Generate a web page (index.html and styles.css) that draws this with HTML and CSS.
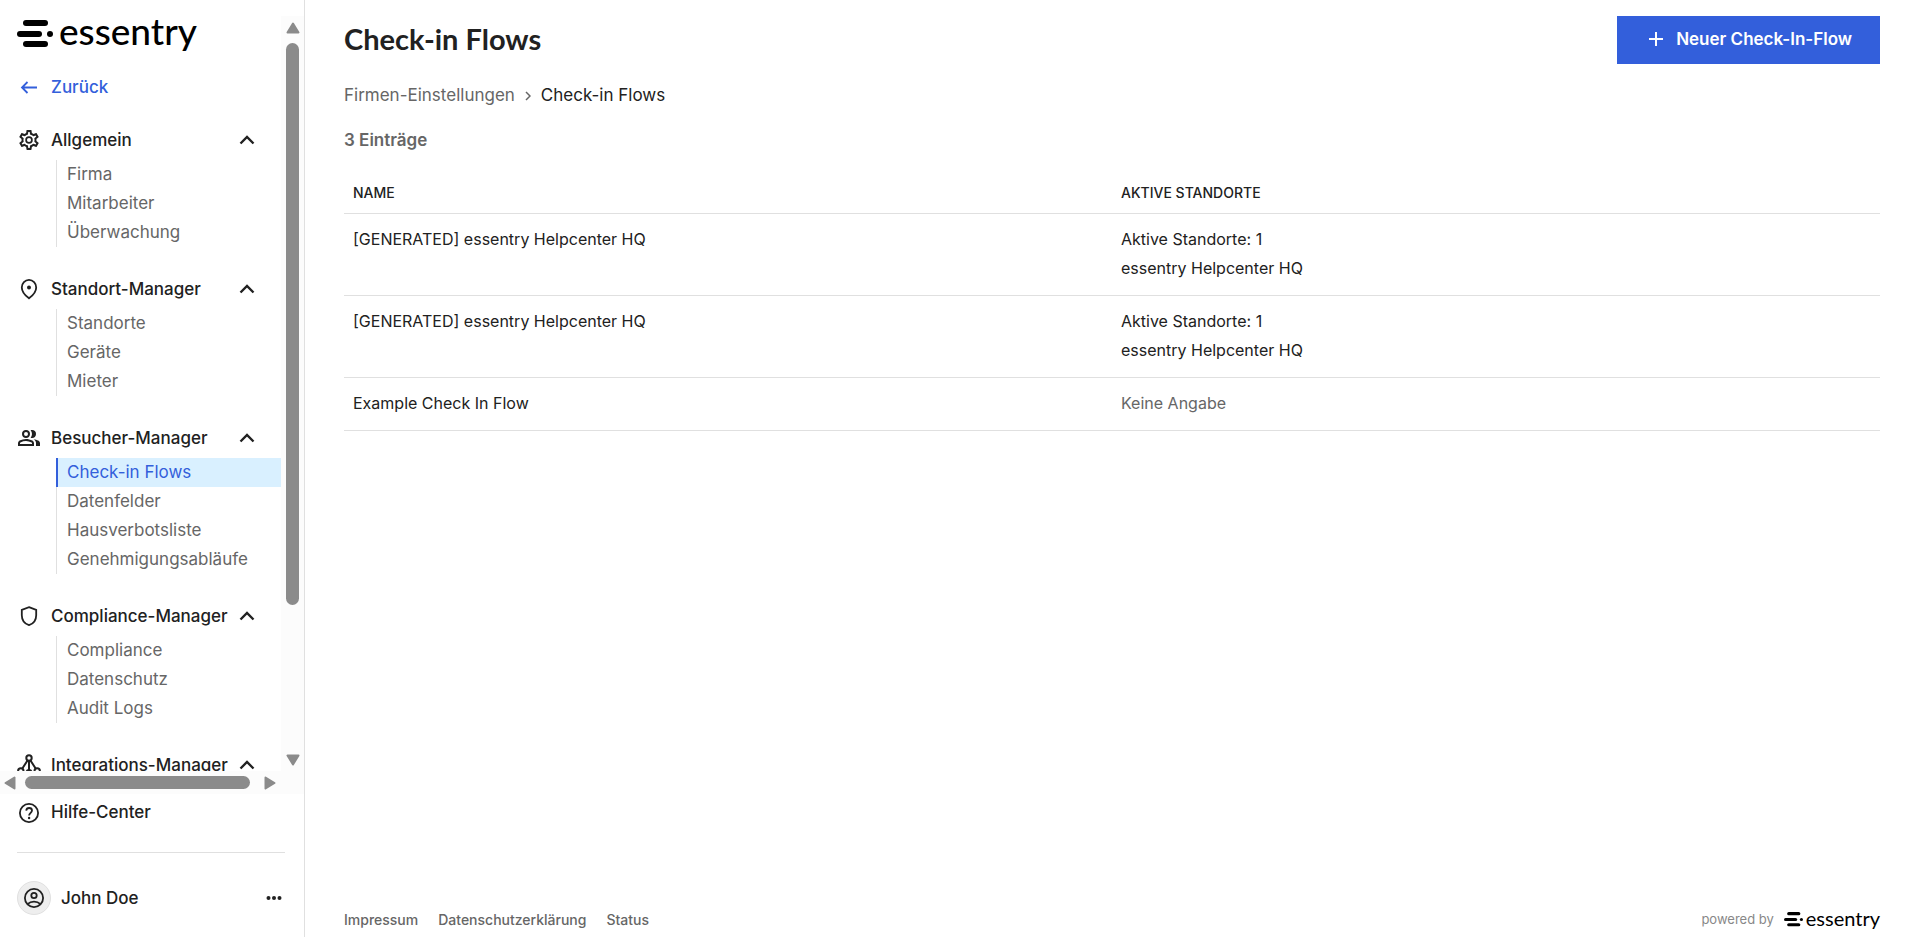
FILE: index.html
```html
<!DOCTYPE html>
<html lang="de">
<head>
  <meta charset="UTF-8"/>
  <meta name="viewport" content="width=device-width, initial-scale=1"/>
  <title>Check-in Flows | essentry</title>
  <link rel="stylesheet" href="styles.css">
</head>
<body>
  <!-- shared shapes -->
  <svg class="sprite" aria-hidden="true">
    <symbol id="mark" viewBox="0 0 36 28">
      <rect x="6" y="0" width="25" height="6" rx="3"/>
      <rect x="0" y="11" width="25" height="6" rx="3"/>
      <circle cx="33" cy="14" r="3"/>
      <rect x="6" y="21" width="25" height="6" rx="3"/>
    </symbol>
    <symbol id="chevron" viewBox="0 0 24 24">
      <path d="M5.500 15.500L12 9l6.500 6.500" fill="none" stroke="currentColor" stroke-width="2.4"/>
    </symbol>
  </svg>

  <aside class="sidebar">
    <div class="scroll-area">
      <nav class="nav">
        <a class="logo" href="#" aria-label="essentry">
          <svg class="logo-mark"><use href="#mark"/></svg>
          <span>essentry</span>
        </a>

        <a class="back" href="#">
          <svg class="icon" viewBox="0 0 24 24" fill="none" stroke="currentColor" stroke-width="1.8"><path d="M20 12.5H5M10.500 7L5 12.500l5.500 5.500"/></svg>
          Zurück
        </a>

        <section class="group">
          <button class="group-head" aria-expanded="true">
            <svg class="icon" viewBox="0 0 24 24" fill="currentColor"><path d="M19.430 12.980c.040-.320.070-.640.070-.980s-.030-.660-.070-.980l2.110-1.650c.190-.150.240-.420.120-.640l-2-3.460c-.090-.160-.260-.250-.440-.250-.060 0-.120.010-.170.030l-2.490 1c-.520-.400-1.080-.730-1.690-.980l-.380-2.650C14.460 2.180 14.250 2 14 2h-4c-.250 0-.460.180-.490.420l-.380 2.650c-.610.250-1.170.590-1.690.980l-2.490-1c-.060-.020-.120-.030-.180-.030-.170 0-.340.090-.430.250l-2 3.460c-.130.220-.070.490.120.640l2.110 1.650c-.040.320-.070.650-.070.980s.030.660.070.980l-2.110 1.650c-.190.150-.240.420-.120.640l2 3.460c.090.160.260.250.440.250.060 0 .120-.010.170-.030l2.490-1c.520.400 1.080.730 1.690.980l.380 2.650c.030.240.240.420.490.420h4c.250 0 .460-.180.490-.420l.380-2.650c.610-.250 1.170-.590 1.690-.980l2.490 1c.060.020.120.030.180.030.170 0 .340-.090.430-.250l2-3.460c.120-.220.070-.490-.120-.640l-2.110-1.650zm-1.980-1.710c.040.310.050.520.050.730s-.020.430-.050.730l-.140 1.130.890.700 1.080.840-.700 1.210-1.270-.510-1.040-.420-.900.680c-.430.320-.840.560-1.250.730l-1.060.430-.160 1.130-.200 1.350h-1.400l-.190-1.350-.160-1.130-1.060-.430c-.430-.180-.830-.410-1.230-.710l-.910-.700-1.060.430-1.270.510-.700-1.210 1.080-.840.890-.700-.140-1.130c-.030-.310-.050-.540-.050-.740s.020-.430.050-.730l.140-1.130-.890-.700-1.080-.840.700-1.210 1.270.510 1.040.420.900-.680c.430-.320.840-.560 1.250-.730l1.060-.430.160-1.130.200-1.350h1.390l.190 1.350.160 1.130 1.060.430c.430.180.830.410 1.230.710l.910.700 1.060-.430 1.270-.510.700 1.210-1.070.850-.890.700.140 1.130z"/><circle cx="12" cy="12" r="2.900" fill="none" stroke="currentColor" stroke-width="1.700"/></svg>
            <span>Allgemein</span>
            <svg class="chevron"><use href="#chevron"/></svg>
          </button>
          <ul>
            <li><a href="#">Firma</a></li>
            <li><a href="#">Mitarbeiter</a></li>
            <li><a href="#">Überwachung</a></li>
          </ul>
        </section>

        <section class="group">
          <button class="group-head" aria-expanded="true">
            <svg class="icon" viewBox="0 0 24 24" fill="none" stroke="currentColor" stroke-width="1.8"><path d="M12 21.300c-2.600-1.900-7.200-5.700-7.200-10.800a7.200 7.600 0 0 1 14.400 0c0 5.100-4.600 8.900-7.200 10.800z"/><circle cx="12" cy="10.500" r="2" fill="currentColor" stroke="none"/></svg>
            <span>Standort-Manager</span>
            <svg class="chevron"><use href="#chevron"/></svg>
          </button>
          <ul>
            <li><a href="#">Standorte</a></li>
            <li><a href="#">Geräte</a></li>
            <li><a href="#">Mieter</a></li>
          </ul>
        </section>

        <section class="group">
          <button class="group-head" aria-expanded="true">
            <svg class="icon" viewBox="0 0 24 24" fill="currentColor"><path d="M1 20v-2.800c0-.600.150-1.100.450-1.560.300-.460.700-.810 1.190-1.050A15.500 15.500 0 0 1 9 13c2.200 0 4.300.530 6.360 1.590.490.240.890.590 1.190 1.050.300.460.450.960.450 1.560V20H1zm18 0v-3c0-.730-.200-1.440-.610-2.110A4.900 4.900 0 0 0 16.650 13.150c.850.100 1.650.270 2.400.510.750.240 1.450.540 2.100.890.600.330 1.060.700 1.380 1.110.310.410.470.860.470 1.340v3h-4zM9 12a3.850 3.850 0 0 1-4-4 3.850 3.850 0 0 1 4-4 3.850 3.850 0 0 1 4 4 3.850 3.850 0 0 1-4 4zm10-4a3.850 3.850 0 0 1-4 4c-.300 0-.700-.050-1.400-.200A6 6 0 0 0 15 8a6 6 0 0 0-1.400-3.800c.400-.150.900-.200 1.400-.200a3.850 3.850 0 0 1 4 4zM3 18h12v-.800a.920.920 0 0 0-.500-.800A12.600 12.600 0 0 0 9 15c-1.850 0-3.650.450-5.500 1.400a.920.920 0 0 0-.500.800V18zm6-8a2 2 0 1 0 0-4 2 2 0 0 0 0 4z"/></svg>
            <span>Besucher-Manager</span>
            <svg class="chevron"><use href="#chevron"/></svg>
          </button>
          <ul>
            <li class="active"><a href="#" aria-current="page">Check-in Flows</a></li>
            <li><a href="#">Datenfelder</a></li>
            <li><a href="#">Hausverbotsliste</a></li>
            <li><a href="#">Genehmigungsabläufe</a></li>
          </ul>
        </section>

        <section class="group">
          <button class="group-head" aria-expanded="true">
            <svg class="icon" viewBox="0 0 24 24" fill="none" stroke="currentColor" stroke-width="1.8"><path d="M12 3.200l7.200 2.700v5.300c0 4.700-3 8.500-7.200 9.900-4.200-1.400-7.200-5.200-7.200-9.900V5.900z"/></svg>
            <span>Compliance-Manager</span>
            <svg class="chevron"><use href="#chevron"/></svg>
          </button>
          <ul>
            <li><a href="#">Compliance</a></li>
            <li><a href="#">Datenschutz</a></li>
            <li><a href="#">Audit Logs</a></li>
          </ul>
        </section>

        <section class="group">
          <button class="group-head" aria-expanded="true">
            <svg class="icon" viewBox="0 0 24 24" fill="none" stroke="currentColor" stroke-width="2"><circle cx="12" cy="5" r="2.700"/><path d="M12 8v10M10.500 7.500L5 16M13.500 7.500L19 16"/><circle cx="3.800" cy="18" r="2.700"/><circle cx="12" cy="19.500" r="2.500"/><circle cx="20.200" cy="18" r="2.700"/></svg>
            <span>Integrations-Manager</span>
            <svg class="chevron"><use href="#chevron"/></svg>
          </button>
        </section>
      </nav>

      <div class="bar bar-y" aria-hidden="true">
        <svg class="arrow" viewBox="0 0 14 12"><path d="M7 1.500L12.500 10.500H1.500z"/></svg>
        <div class="track"><div class="thumb"></div></div>
        <svg class="arrow" viewBox="0 0 14 12"><path d="M1.500 1.500h11L7 10.500z"/></svg>
      </div>
      <div class="bar bar-x" aria-hidden="true">
        <svg class="arrow" viewBox="0 0 12 14"><path d="M1.500 7L10.500 1.500v11z"/></svg>
        <div class="track"><div class="thumb"></div></div>
        <svg class="arrow" viewBox="0 0 12 14"><path d="M1.500 1.500L10.500 7l-9 5.500z"/></svg>
      </div>
    </div>

    <div class="sidebar-bottom">
      <a class="help" href="#">
        <svg class="icon" viewBox="0 0 24 24" fill="none" stroke="currentColor" stroke-width="1.8"><circle cx="12" cy="12" r="9.100"/><path d="M9.200 9.600c.200-1.700 1.300-2.600 2.900-2.600 1.700 0 2.900 1 2.900 2.500 0 1.200-.700 1.800-1.600 2.600-.900.800-1.300 1.300-1.300 2.400"/><circle cx="12.100" cy="17" r="1.200" fill="currentColor" stroke="none"/></svg>
        Hilfe-Center
      </a>
      <div class="user">
        <span class="avatar">
          <svg class="icon" viewBox="0 0 24 24" fill="none" stroke="currentColor" stroke-width="1.8"><circle cx="12" cy="12" r="9.100"/><circle cx="12" cy="9.500" r="2.700"/><path d="M5.500 18.200c1.700-1.600 3.900-2.500 6.500-2.500s4.800.900 6.500 2.500"/></svg>
        </span>
        <span class="user-name">John Doe</span>
        <button class="more" aria-label="Mehr">
          <svg viewBox="0 0 16 6"><circle cx="2.500" cy="3" r="2"/><circle cx="8" cy="3" r="2"/><circle cx="13.500" cy="3" r="2"/></svg>
        </button>
      </div>
    </div>
  </aside>

  <main class="main">
    <header class="page-head">
      <h1>Check-in Flows</h1>
      <button class="primary">
        <svg viewBox="0 0 14 14" fill="none" stroke="currentColor" stroke-width="2"><path d="M7 0v14M0 7h14"/></svg>
        Neuer Check-In-Flow
      </button>
    </header>

    <nav class="crumbs" aria-label="Breadcrumb">
      <a href="#">Firmen-Einstellungen</a>
      <svg viewBox="0 0 6 10" fill="none" stroke="currentColor" stroke-width="1.5"><path d="M1 1l4 4-4 4"/></svg>
      <span>Check-in Flows</span>
    </nav>

    <p class="count">3 Einträge</p>

    <table>
      <thead>
        <tr><th>NAME</th><th>AKTIVE STANDORTE</th></tr>
      </thead>
      <tbody>
        <tr>
          <td>[GENERATED] essentry Helpcenter HQ</td>
          <td>Aktive Standorte: 1<br>essentry Helpcenter HQ</td>
        </tr>
        <tr>
          <td>[GENERATED] essentry Helpcenter HQ</td>
          <td>Aktive Standorte: 1<br>essentry Helpcenter HQ</td>
        </tr>
        <tr>
          <td>Example Check In Flow</td>
          <td class="muted">Keine Angabe</td>
        </tr>
      </tbody>
    </table>

    <footer class="footer">
      <a href="#">Impressum</a>
      <a href="#">Datenschutzerklärung</a>
      <a href="#">Status</a>
      <span class="powered">powered by</span>
      <span class="logo logo-small">
        <svg class="logo-mark"><use href="#mark"/></svg>
        <span>essentry</span>
      </span>
    </footer>
  </main>
</body>
</html>
```
FILE: styles.css
```css
* { box-sizing:border-box; }
body { margin:0; display:flex; height:100vh; font-family:Inter,sans-serif; font-size:17px; line-height:29px; color:#212121; background:#fff; }
a { color:inherit; text-decoration:none; }
button { font:inherit; color:inherit; background:none; border:none; padding:0; cursor:pointer; }
ul { list-style:none; margin:0; padding:0; }
.sprite { position:absolute; width:0; height:0; }
.icon { width:24px; height:24px; flex:none; }

/* logo */
.logo { display:flex; align-items:center; gap:6px; height:44px; font-family:Lato,sans-serif; font-size:37px; line-height:38px; color:#000; }
.logo span { padding-bottom:6px; }
.logo-mark { width:36px; height:28px; flex:none; }
.logo-small { gap:3px; height:24px; font-size:20px; line-height:20px; }
.logo-small .logo-mark { width:19px; height:15px; }

/* sidebar */
.sidebar { display:flex; flex-direction:column; flex:none; width:305px; border-right:1px solid #e0e0e0; }
.scroll-area { flex:1; min-height:0; display:grid; grid-template:minmax(0,1fr) 23px / minmax(0,1fr) 23px; }
.nav { overflow:hidden; padding:12px 0 0 17px; font-weight:500; }
.back { display:flex; align-items:center; gap:10px; height:40px; margin:11px 0 13px; color:#335fdb; }
.group { margin-bottom:22px; }
.group-head { display:flex; align-items:center; gap:10px; width:100%; height:40px; padding-right:22px; font-weight:500; text-align:left; white-space:nowrap; }
.group-head span { flex:1; min-width:0; }
.chevron { width:24px; height:24px; flex:none; }
.group ul { margin-left:39px; font-weight:400; color:#666; }
.group li { border-left:1px solid #e0e0e0; padding-left:10px; }
.group li.active { border-left:2px solid #335fdb; padding-left:9px; background:#d9f0ff; color:#335fdb; }
.group li a { display:block; line-height:28px; padding-bottom:1px; }

.bar { display:flex; align-items:center; background:#fcfcfc; }
.bar-y { flex-direction:column; margin-top:16px; padding:6px 0 5px; }
.bar-x { grid-column:1 / 3; padding:0 28px 0 4px; }
.arrow { flex:none; fill:#8b8b8b; stroke:#8b8b8b; stroke-width:2; stroke-linejoin:round; }
.bar-y .arrow { width:14px; height:12px; }
.bar-x .arrow { width:12px; height:14px; }
.track { flex:1; }
.thumb { background:#8b8b8b; border-radius:7px; }
.bar-y .track { width:13px; padding:9px 0; }
.bar-y .thumb { height:80%; }
.bar-x .track { padding:0 14px 0 9px; }
.bar-x .thumb { height:13px; }

.sidebar-bottom { padding:0 19px 22px 17px; font-weight:500; }
.help { display:flex; align-items:center; gap:10px; height:37px; margin-bottom:21px; }
.user { display:flex; align-items:center; gap:10px; border-top:1px solid #e0e0e0; padding-top:28px; }
.avatar { display:flex; align-items:center; justify-content:center; width:34px; height:34px; border:1px solid #e0e0e0; border-radius:50%; background:#eee; }
.user-name { flex:1; }
.more { display:flex; padding:8px 3px; }
.more svg { width:16px; height:6px; fill:#212121; }

/* content */
.main { flex:1; min-width:0; display:flex; flex-direction:column; padding:16px 32px 3px 39px; }
.page-head { display:flex; align-items:center; justify-content:space-between; }
h1 { margin:0; padding-bottom:2px; font-family:Lato,sans-serif; font-size:29px; line-height:46px; font-weight:700; }
.primary { display:flex; align-items:center; gap:13px; height:48px; padding:0 28px 2px 32px; background:#335fdb; color:#fff; font-weight:600; }
.primary svg { width:14px; height:14px; }
.crumbs { display:flex; align-items:center; gap:10px; margin-top:17px; }
.crumbs a { color:#666; }
.crumbs svg { width:6px; height:10px; color:#666; }
.count { margin:16px 0 17px; font-weight:600; color:#666; }
table { width:100%; table-layout:fixed; border-collapse:collapse; font-size:16px; }
th,td { padding:11px 10px 12px 9px; border-bottom:1px solid #e0e0e0; text-align:left; vertical-align:top; font-weight:400; }
th { padding:6px 10px 6px 9px; font-size:14px; font-weight:500; }
.muted { color:#666; }

.footer { display:flex; align-items:center; gap:20px; margin-top:auto; font-size:14px; font-weight:500; color:#666; }
.powered { margin-left:auto; font-size:13px; font-weight:400; color:#888; }
.footer .logo { margin-left:-10px; font-weight:400; }
.logo-small span { padding-bottom:3px; }
```
